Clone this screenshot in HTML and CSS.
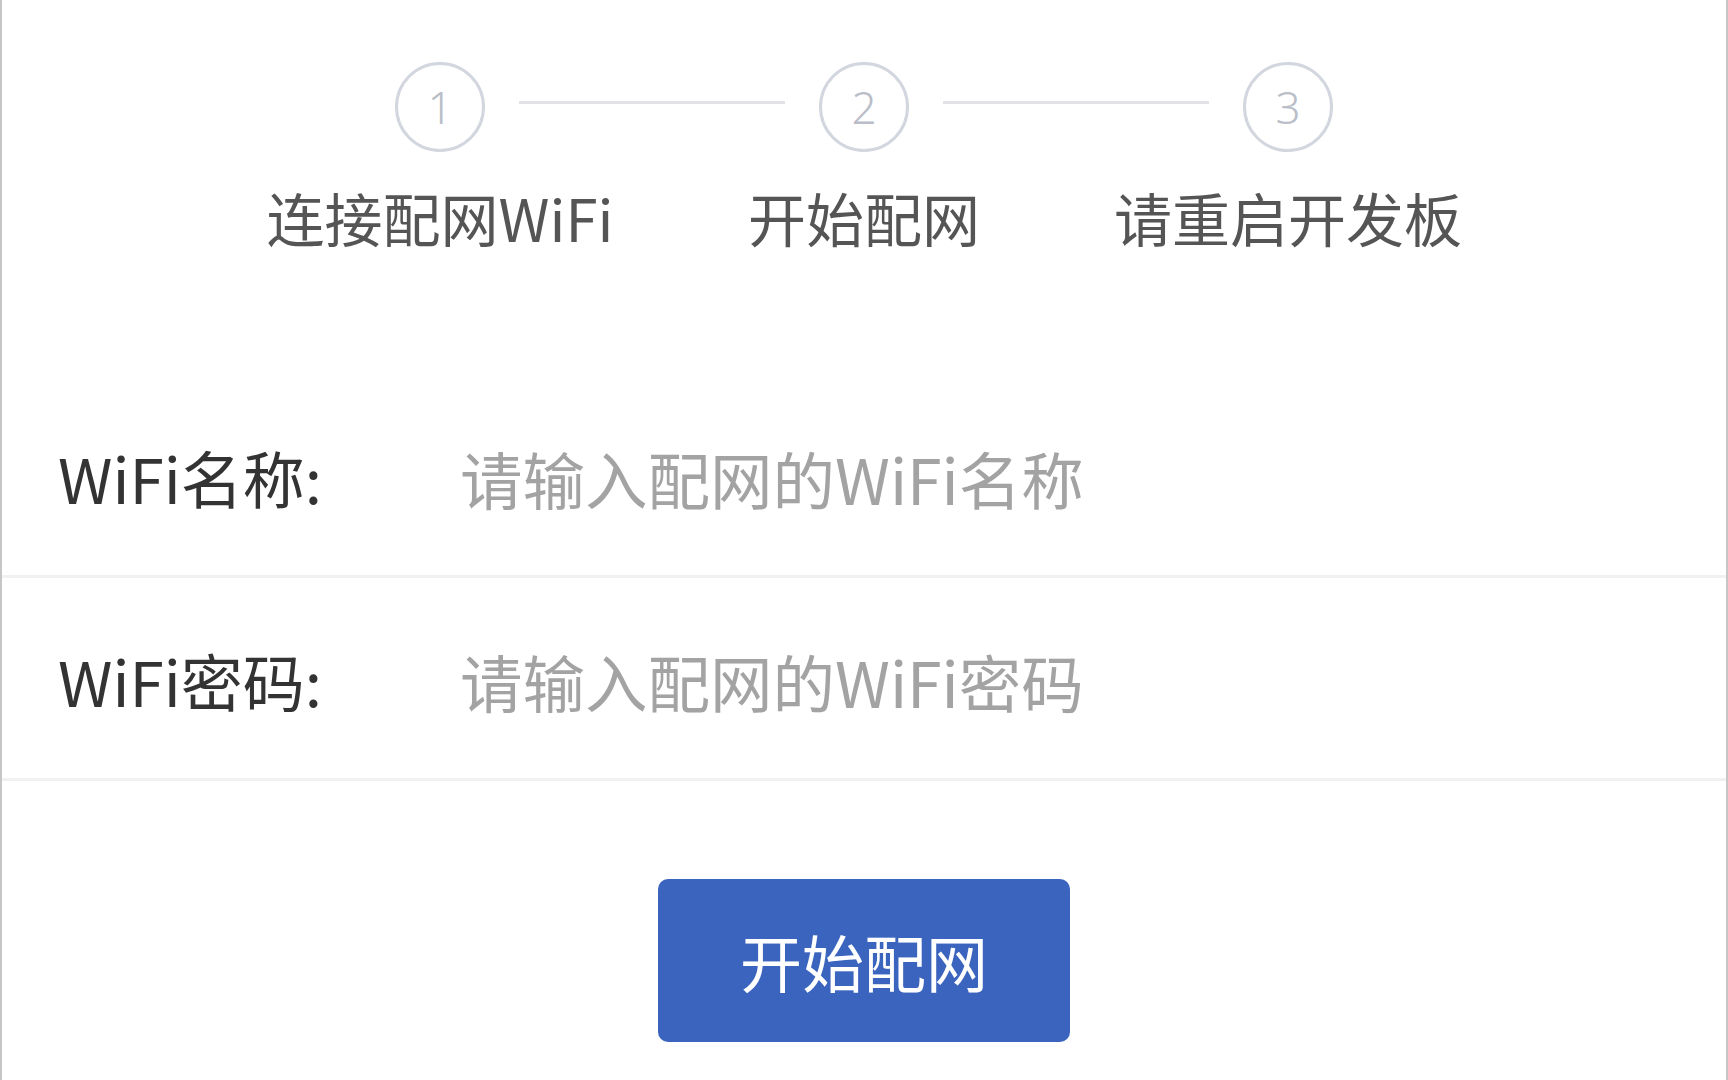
FILE: index.html
```html
<!DOCTYPE html>
<html lang="zh-CN">
<head>
<meta charset="utf-8">
<title>配网</title>
<link rel="stylesheet" href="styles.css">
</head>
<body>
<div class="page">
  <div class="steps">
    <div class="step">
      <div class="circle">1</div>
      <div class="step-label">连接配网WiFi</div>
    </div>
    <div class="connector"></div>
    <div class="step">
      <div class="circle">2</div>
      <div class="step-label">开始配网</div>
    </div>
    <div class="connector"></div>
    <div class="step">
      <div class="circle">3</div>
      <div class="step-label">请重启开发板</div>
    </div>
  </div>

  <div class="form">
    <div class="row">
      <div class="row-label">WiFi名称:</div>
      <div class="row-input">请输入配网的WiFi名称</div>
    </div>
    <div class="row">
      <div class="row-label">WiFi密码:</div>
      <div class="row-input">请输入配网的WiFi密码</div>
    </div>
  </div>

  <div class="actions">
    <button class="btn">开始配网</button>
  </div>
</div>
</body>
</html>
```

FILE: styles.css
```css
* { box-sizing: border-box; }
html, body { margin: 0; padding: 0; background: #ffffff; }
body {
  font-family: "Noto Sans CJK SC", "Noto Sans", sans-serif;
}
.page {
  width: 1728px;
  height: 1080px;
  border-left: 2px solid #c6c6c6;
  border-right: 2px solid #c6c6c6;
  overflow: hidden;
  padding-top: 62px;
}
.steps {
  display: flex;
  justify-content: center;
  align-items: flex-start;
}
.step {
  width: 90px;
  display: flex;
  flex-direction: column;
  align-items: center;
}
.circle {
  width: 90px;
  height: 90px;
  border: 3px solid #d2d6de;
  border-radius: 50%;
  display: flex;
  align-items: center;
  justify-content: center;
  color: #b9bec8;
  font-family: "Noto Sans", sans-serif;
  font-weight: 300;
  font-size: 44px;
  line-height: 1;
}
.step-label {
  margin-top: 30px;
  white-space: nowrap;
  font-size: 58px;
  line-height: 70px;
  color: #555555;
}
.connector {
  width: 266px;
  height: 3px;
  margin: 39px 34px 0;
  background: #e1e3e7;
}
.form {
  margin-top: 123px;
}
.row {
  height: 203px;
  display: flex;
  align-items: center;
  padding-left: 56px;
  padding-top: 4px;
  border-bottom: 3px solid #f1f1f1;
}
.row-label {
  width: 402px;
  font-size: 62px;
  color: #333333;
}
.row-input {
  font-size: 62.5px;
  color: #a3a3a3;
}
.actions {
  display: flex;
  justify-content: center;
  margin-top: 98px;
}
.btn {
  width: 412px;
  height: 163px;
  border: none;
  border-radius: 10px;
  background: #3b64be;
  color: #ffffff;
  font-family: "Noto Sans CJK SC", "Noto Sans", sans-serif;
  font-size: 62px;
  padding: 0;
}
```
